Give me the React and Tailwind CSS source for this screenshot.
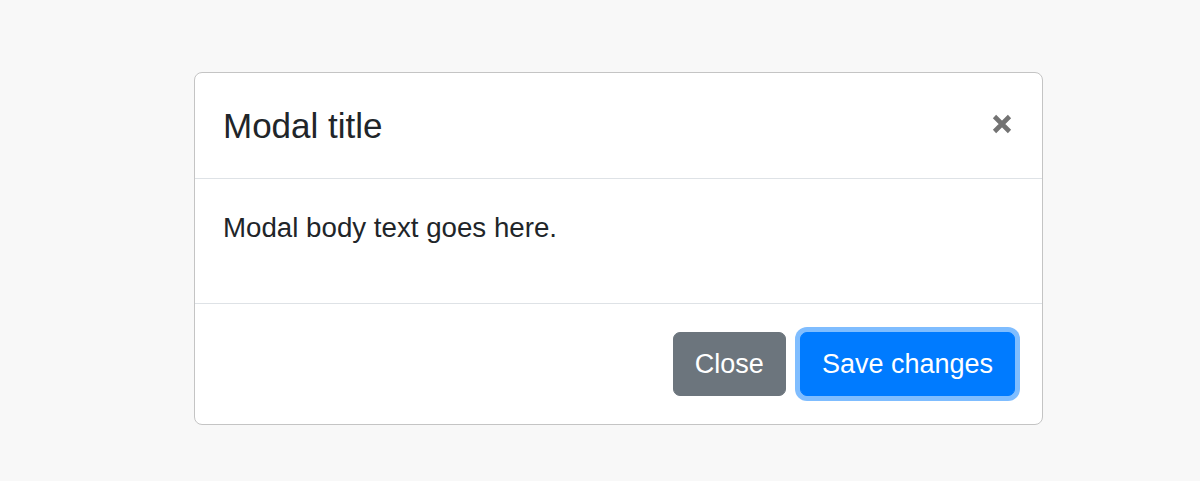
import React from 'react';

const CloseIcon = () => (
    <svg width="22" height="22" viewBox="0 0 22 22" aria-hidden="true">
        <path d="M3.5 3.5 L18.5 18.5 M18.5 3.5 L3.5 18.5" stroke="#737373" strokeWidth="4.6" strokeLinecap="butt" />
    </svg>
);

const App = () => {
    return (
        <div className="h-[481px] w-full bg-[#f8f8f8] pt-[72px] pl-[194px] font-['Liberation_Sans',Arial,sans-serif] text-[#212529]">
            {/* Modal */}
            <div className="w-[849px] bg-white border-[1.5px] border-[#c4c4c4] rounded-[8px]">
                <div className="flex items-center justify-between px-[28px] py-[27px] border-b border-[#dee2e6]">
                    <h5 className="text-[35px] leading-[51px] font-normal">Modal title</h5>
                    <button className="mr-[1px] mt-[-3px] flex items-center justify-center">
                        <CloseIcon />
                    </button>
                </div>
                <div className="p-[28px] pb-[27px]">
                    <p className="text-[27.7px] leading-[41px] mb-[28px]">Modal body text goes here.</p>
                </div>
                <div className="flex items-center justify-end px-[20px] py-[21px] border-t border-[#dee2e6]">
                    <button className="m-[7px] h-[64px] px-[21px] rounded-[7px] bg-[#6c757d] border-[1.5px] border-[#6c757d] text-white text-[27px] leading-[41px]">
                        Close
                    </button>
                    <button className="m-[7px] h-[64px] px-[21px] rounded-[7px] bg-[#007bff] border-[1.5px] border-[#007bff] text-white text-[27px] leading-[41px] shadow-[0_0_0_5px_rgba(0,123,255,0.5)]">
                        Save changes
                    </button>
                </div>
            </div>
        </div>
    );
};

export default App;
